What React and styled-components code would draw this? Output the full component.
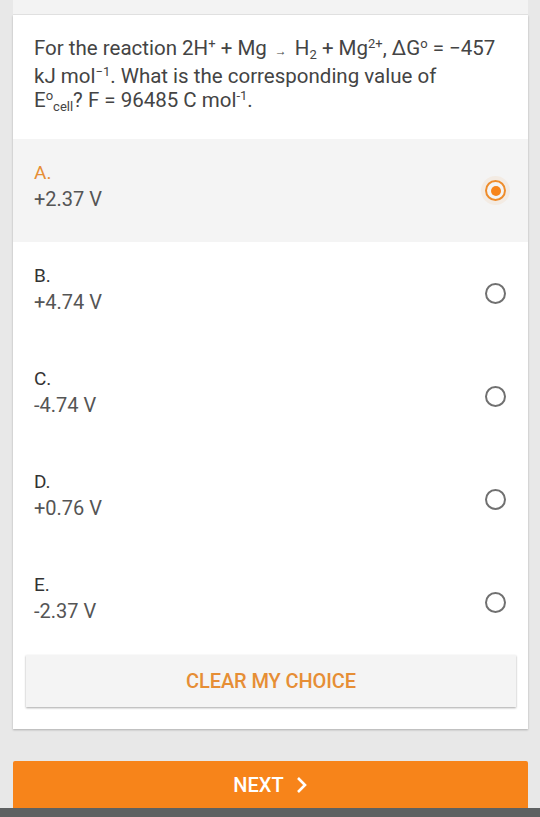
import { useState } from "react";
import styled, { createGlobalStyle } from "styled-components";

const Global = createGlobalStyle`
  html, body { margin: 0; padding: 0; }
  body {
    background: #e8e8e8;
    font-family: Roboto, "Noto Sans", sans-serif;
    width: 540px;
    height: 817px;
    overflow: hidden;
  }
`;

const Page = styled.div`
  position: relative;
  height: 817px;
  padding: 0 12px 0 13px;
  box-sizing: border-box;
`;

const TopStrip = styled.div`
  height: 14px;
  background: #f3f3f3;
  border-bottom: 1px solid #e4e4e4;
`;

const Card = styled.div`
  background: #fff;
  box-shadow: 0 1px 2px rgba(0, 0, 0, 0.25);
  padding-bottom: 22px;
`;

const Question = styled.div`
  padding: 21px 10px 26px 21px;
  font-size: 20.5px;
  line-height: 24.5px;
  color: #444;
  white-space: nowrap;
  sup, sub { font-size: 13px; line-height: 0; }
  sup { vertical-align: 7px; }
  sub { vertical-align: -4px; }
`;

const Arrow = styled.span`
  font-size: 12px;
  margin: 0 8px;
`;

const Option = styled.label`
  display: flex;
  align-items: center;
  justify-content: space-between;
  height: 103px;
  padding: 0 22px 0 21px;
  background: ${(p) => (p.$selected ? "#f4f4f4" : "#fff")};
  cursor: pointer;
`;

const OptionText = styled.div`
  display: flex;
  flex-direction: column;
  gap: 4px;
  padding-bottom: 8px;
  line-height: 22px;
`;

const Letter = styled.span`
  font-size: 19px;
  color: ${(p) => (p.$selected ? "#e68e35" : "#333")};
`;

const Value = styled.span`
  font-size: 20px;
  color: #555;
`;

const Radio = styled.span`
  width: 21px;
  height: 21px;
  border-radius: 50%;
  box-sizing: border-box;
  border: 2.5px solid ${(p) => (p.$selected ? "#ee8c2b" : "#707070")};
  display: flex;
  align-items: center;
  justify-content: center;
  margin-top: 1px;
  box-shadow: ${(p) => (p.$selected ? "0 0 0 4px rgba(248,140,40,0.08)" : "none")};
  &::after {
    content: "";
    width: 10px;
    height: 10px;
    border-radius: 50%;
    background: #f7841a;
    display: ${(p) => (p.$selected ? "block" : "none")};
  }
`;

const ClearButton = styled.button`
  display: block;
  margin: 1px 12px 0 13px;
  width: calc(100% - 25px);
  height: 52px;
  border: none;
  background: #f4f4f4;
  box-shadow: 0 1px 2px rgba(0, 0, 0, 0.35);
  color: #e68e35;
  font-family: Roboto, sans-serif;
  font-weight: 500;
  font-size: 20px;
  letter-spacing: -0.1px;
`;

const NextButton = styled.button`
  display: flex;
  align-items: center;
  justify-content: center;
  gap: 12px;
  margin-top: 32px;
  width: 100%;
  height: 50px;
  border: none;
  border-radius: 2px;
  background: #f7841a;
  color: #fff;
  font-family: Roboto, sans-serif;
  font-weight: 500;
  font-size: 20px;
  padding-bottom: 2px;
`;

const BottomBar = styled.div`
  position: absolute;
  left: 0;
  right: 0;
  bottom: 0;
  height: 9px;
  background: #5e6162;
`;

const options = [
  { letter: "A.", value: "+2.37 V" },
  { letter: "B.", value: "+4.74 V" },
  { letter: "C.", value: "-4.74 V" },
  { letter: "D.", value: "+0.76 V" },
  { letter: "E.", value: "-2.37 V" },
];

export default function App() {
  const [choice, setChoice] = useState(0);

  return (
    <Page>
      <Global />
      <TopStrip />
      <Card>
        <Question>
          For the reaction 2H<sup>+</sup> + Mg<Arrow>→</Arrow>H<sub>2</sub> + Mg
          <sup>2+</sup>, ΔG<sup>o</sup> = −457
          <br />
          kJ mol<sup>−1</sup>. What is the corresponding value of
          <br />
          E<sup>o</sup>
          <sub>cell</sub>? F = 96485 C mol<sup>-1</sup>.
        </Question>
        {options.map((o, i) => (
          <Option key={o.letter} $selected={choice === i} onClick={() => setChoice(i)}>
            <OptionText>
              <Letter $selected={choice === i}>{o.letter}</Letter>
              <Value>{o.value}</Value>
            </OptionText>
            <Radio $selected={choice === i} />
          </Option>
        ))}
        <ClearButton onClick={() => setChoice(null)}>CLEAR MY CHOICE</ClearButton>
      </Card>
      <NextButton>
        NEXT
        <svg width="12" height="18" viewBox="0 0 12 18">
          <path d="M2 2 L9 9 L2 16" fill="none" stroke="#fff" strokeWidth="2.6" />
        </svg>
      </NextButton>
      <BottomBar />
    </Page>
  );
}
